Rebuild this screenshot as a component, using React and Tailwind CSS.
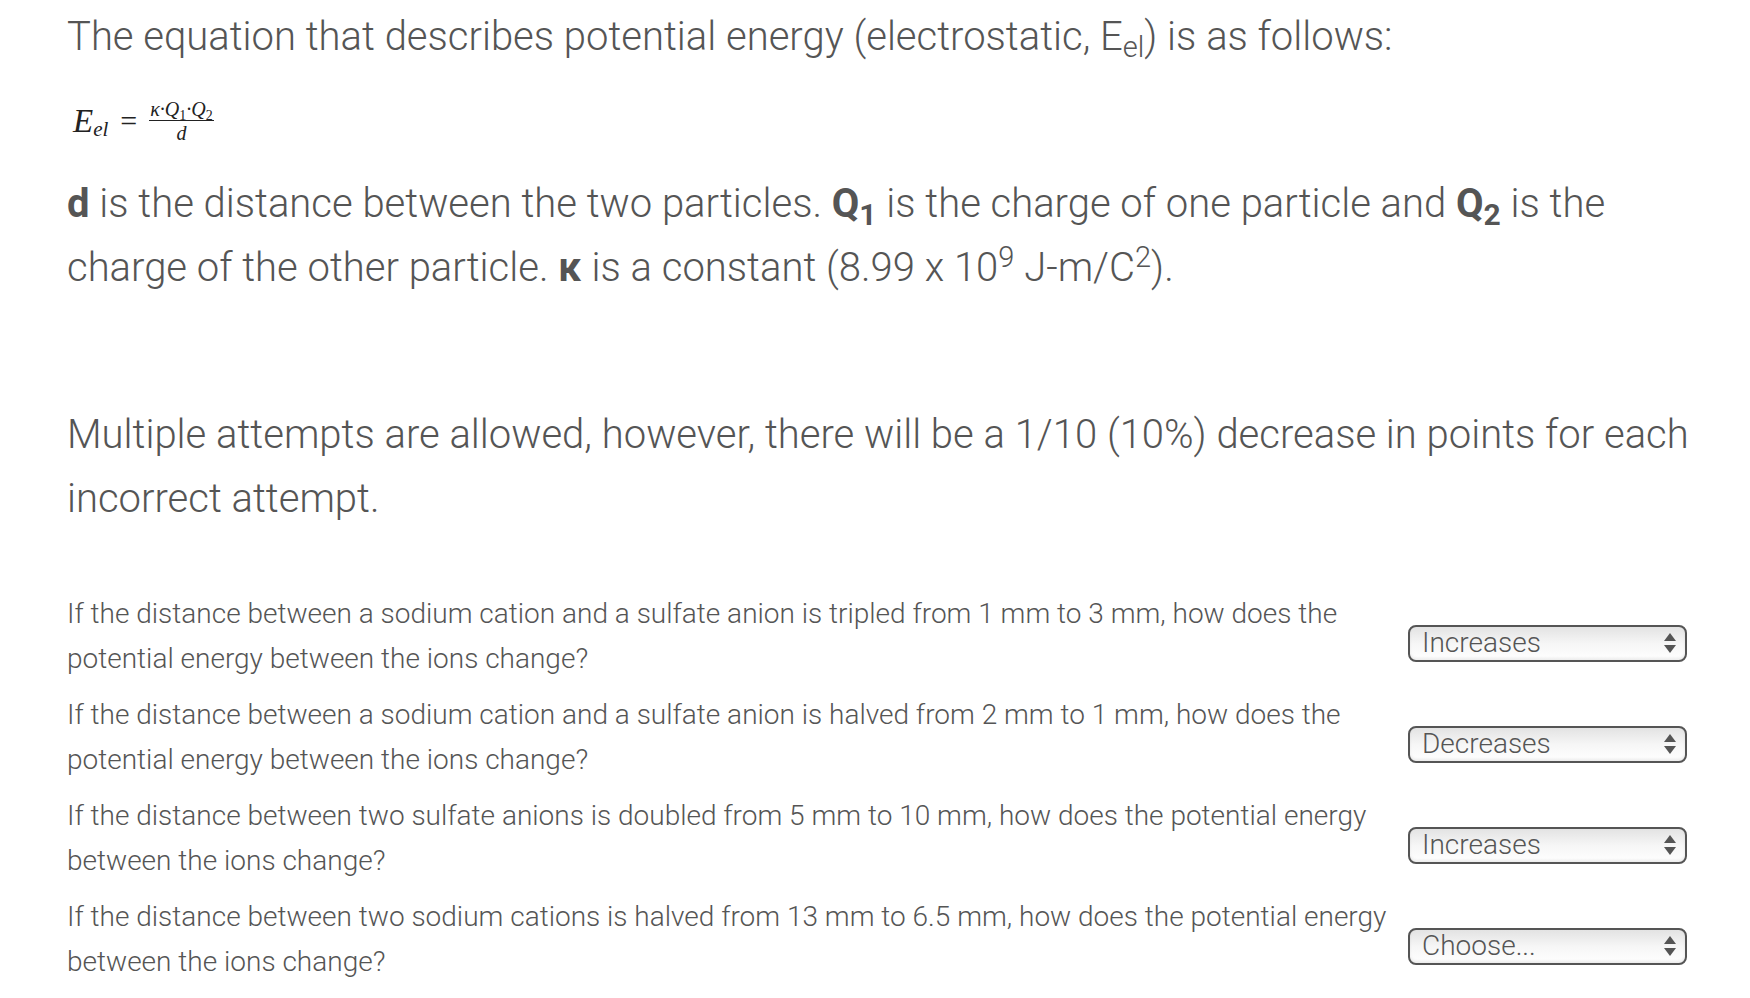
import React from 'react';

const questions = [
  {
    text: 'If the distance between a sodium cation and a sulfate anion is tripled from 1 mm to 3 mm, how does the potential energy between the ions change?',
    answer: 'Increases',
  },
  {
    text: 'If the distance between a sodium cation and a sulfate anion is halved from 2 mm to 1 mm, how does the potential energy between the ions change?',
    answer: 'Decreases',
  },
  {
    text: 'If the distance between two sulfate anions is doubled from 5 mm to 10 mm, how does the potential energy between the ions change?',
    answer: 'Increases',
  },
  {
    text: 'If the distance between two sodium cations is halved from 13 mm to 6.5 mm, how does the potential energy between the ions change?',
    answer: 'Choose...',
  },
];

function FakeSelect({ value }) {
  return (
    <div className="flex h-[37px] w-[279px] shrink-0 items-center justify-between rounded-[8px] border-2 border-[#555] bg-gradient-to-b from-[#e3e3e3] via-[#f6f6f6] to-white pl-[12px] pr-[8px] shadow-[inset_0_-2px_3px_rgba(0,0,0,0.08)]">
      <span className="text-[28px] font-light leading-none text-[#555]">{value}</span>
      <svg width="14" height="24" viewBox="0 0 14 24" className="text-[#555]">
        <path d="M7 2 L13 10 L1 10 Z" fill="currentColor" />
        <path d="M1 14 L13 14 L7 22 Z" fill="currentColor" />
      </svg>
    </div>
  );
}

function Equation() {
  return (
    <div className="flex items-center pl-[6px] text-[#222] [font-family:'Liberation_Serif',serif]">
      <span className="text-[33px] italic leading-none">E</span>
      <span className="mt-[16px] text-[21px] italic leading-none">el</span>
      <span className="mx-[12px] text-[30px] leading-none">=</span>
      <span className="inline-flex flex-col items-center">
        <span className="border-b border-[#222] px-[1px] pb-[1px] text-[20px] italic leading-none">
          κ·Q<sub className="text-[14px] not-italic">1</sub>·Q<sub className="text-[14px] not-italic">2</sub>
        </span>
        <span className="pt-[2px] text-[20px] italic leading-none">d</span>
      </span>
    </div>
  );
}

export default function App() {
  return (
    <div className="min-h-screen w-full bg-white [font-family:Roboto,'Liberation_Sans',sans-serif]">
      <div className="w-[1690px] pl-[67px] pt-[5px] font-light text-[#555]">
        <p className="text-[40px] leading-[64px]">
          The equation that describes potential energy (electrostatic, E<sub className="text-[29px]">el</sub>) is as follows:
        </p>

        <div className="mt-[30px] h-[44px]">
          <Equation />
        </div>

        <p className="mt-[29px] text-[40px] leading-[64px]">
          <b className="font-bold">d</b> is the distance between the two particles.{' '}
          <b className="font-bold">Q<sub className="text-[30px]">1</sub></b> is the charge of one particle and{' '}
          <b className="font-bold">Q<sub className="text-[30px]">2</sub></b> is the charge of the other particle.{' '}
          <b className="font-bold">κ</b> is a constant (8.99 x 10<sup className="text-[29px]">9</sup> J-m/C<sup className="text-[29px]">2</sup>).
        </p>

        <p className="mt-[103px] text-[40px] leading-[64px]">
          Multiple attempts are allowed, however, there will be a 1/10 (10%) decrease in points for each incorrect attempt.
        </p>

        <div className="mt-[61px] flex flex-col gap-[12px]">
          {questions.map((q, i) => (
            <div key={i} className="flex items-center gap-[10px]">
              <p className="w-[1331px] text-[28px] leading-[44.5px]">{q.text}</p>
              <div className="mt-[13px]">
                <FakeSelect value={q.answer} />
              </div>
            </div>
          ))}
        </div>
      </div>
    </div>
  );
}
